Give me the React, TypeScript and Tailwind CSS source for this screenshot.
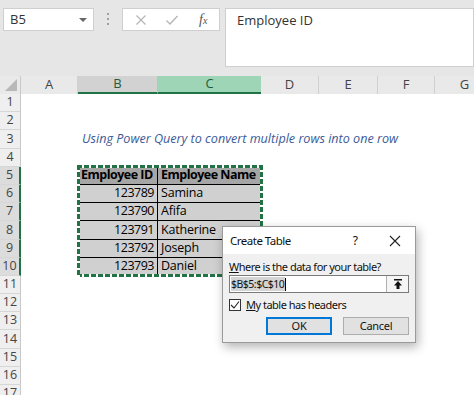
import React from "react";

const cols = [
  { k: "A", w: "w-[57px]" },
  { k: "B", w: "w-[80px]" },
  { k: "C", w: "w-[103px]" },
  { k: "D", w: "w-[58px]" },
  { k: "E", w: "w-[59px]" },
  { k: "F", w: "w-[57px]" },
  { k: "G", w: "w-[60px]" },
];

const data: [string, string][] = [
  ["123789", "Samina"],
  ["123790", "Afifa"],
  ["123791", "Katherine"],
  ["123792", "Joseph"],
  ["123793", "Daniel"],
];

function ColHeader() {
  return (
    <div className="flex h-[18px] bg-[#e9e9e9] text-[13px] text-[#444]">
      <div className="relative w-[21px] shrink-0 border-r border-[#c8c8c8]">
        <div className="absolute right-[3px] bottom-[3px] w-0 h-0 border-l-[12px] border-l-transparent border-b-[12px] border-b-[#b8b8b8]" />
      </div>
      {cols.map((c) => {
        let cls = "border-r border-[#d0d0d0]";
        if (c.k === "B") cls = "bg-[#d2d2d2] border-b-2 border-b-[#217346] border-r border-r-[#c0c0c0] text-[#1e5c3a]";
        if (c.k === "C") cls = "bg-[#9fd5b7] border-b-2 border-b-[#217346] text-[#1e5c3a]";
        return (
          <div key={c.k} className={`${c.w} shrink-0 flex items-center justify-center ${cls}`}>
            {c.k}
          </div>
        );
      })}
    </div>
  );
}

function Row({ n }: { n: number }) {
  const sel = n >= 5 && n <= 10;
  let b: React.ReactNode = null;
  let c: React.ReactNode = null;
  let bCls = "";
  let cCls = "";
  if (n === 3) {
    b = (
      <span className="absolute left-[4px] top-0 whitespace-nowrap italic text-[#3b5a97] text-[12.6px] leading-[18px]">
        Using Power Query to convert multiple rows into one row
      </span>
    );
  }
  if (n === 5) {
    bCls = "bg-[#a6a6a6] border-t border-b border-r border-black";
    cCls = "bg-[#a6a6a6] border-t border-b border-r border-black";
    b = <span className="pl-[3px] font-bold text-[12.5px] tracking-[-0.5px] text-black whitespace-nowrap">Employee ID</span>;
    c = <span className="pl-[3px] font-bold text-[12.5px] tracking-[-0.5px] text-black whitespace-nowrap">Employee Name</span>;
  }
  if (n >= 6 && n <= 10) {
    const d = data[n - 6];
    bCls = "bg-[#d0d0d0] border-b border-r border-black justify-end";
    cCls = "bg-[#d0d0d0] border-b border-r border-black";
    b = <span className="pr-[3px] text-[12.5px] tracking-[-0.5px] text-black">{d[0]}</span>;
    c = <span className="pl-[3px] text-[12.5px] tracking-[-0.2px] text-black">{d[1]}</span>;
  }
  return (
    <div className="flex h-[18.2px]">
      <div
        className={`w-[21px] shrink-0 flex items-center justify-center text-[12.5px] text-[#444] border-b border-[#d6d6d6] ${
          sel ? "bg-[#dcdcdc] border-r-2 border-r-[#217346]" : "bg-[#efefef] border-r border-r-[#c8c8c8]"
        }`}
      >
        {n}
      </div>
      <div className="w-[57px] shrink-0" />
      <div className={`relative w-[80px] shrink-0 flex items-center overflow-visible ${bCls}`}>{b}</div>
      <div className={`w-[103px] shrink-0 flex items-center overflow-hidden ${cCls}`}>{c}</div>
      <div className="flex-1" />
    </div>
  );
}

export default function App() {
  const rows = Array.from({ length: 17 }, (_, i) => i + 1);
  return (
    <div
      className="relative w-[474px] h-[395px] overflow-hidden bg-white"
      style={{ fontFamily: '"Open Sans", "Noto Sans", sans-serif' }}
    >
      {/* top formula bar area */}
      <div className="h-[76px] bg-[#e6e6e6] flex items-start pt-[8px] pl-[3px]">
        <div className="w-[91px] h-[23px] bg-white border border-[#cfcfcf] flex items-center justify-between pl-[6px] pr-[6px] text-[13px] text-[#333]">
          <span>B5</span>
          <span className="w-0 h-0 border-l-[4px] border-r-[4px] border-t-[4px] border-l-transparent border-r-transparent border-t-[#666]" />
        </div>
        <div className="ml-[13px] mt-[5px] flex flex-col gap-[3px]">
          <span className="w-[2px] h-[2px] bg-[#a0a0a0]" />
          <span className="w-[2px] h-[2px] bg-[#a0a0a0]" />
          <span className="w-[2px] h-[2px] bg-[#a0a0a0]" />
        </div>
        <div className="ml-[13px] w-[98px] h-[23px] bg-white border border-[#cfcfcf] flex items-center pl-[12px]">
          <svg width="12" height="12" viewBox="0 0 12 12">
            <path d="M1.5 1.5 L10.5 10.5 M10.5 1.5 L1.5 10.5" stroke="#b5b5b5" strokeWidth="1.2" fill="none" />
          </svg>
          <svg className="ml-[18px]" width="14" height="12" viewBox="0 0 14 12">
            <path d="M1.5 6.5 L5 10 L12.5 2" stroke="#b5b5b5" strokeWidth="1.3" fill="none" />
          </svg>
          <span
            className="ml-[20px] italic text-[14px] text-[#555]"
            style={{ fontFamily: '"Liberation Serif", serif' }}
          >
            f<span className="text-[10px]">x</span>
          </span>
        </div>
        <div className="ml-[5px] flex-1 h-[59px] bg-white border border-[#cfcfcf] pl-[11px] pt-[2px] text-[13px] text-[#333]">
          Employee ID
        </div>
      </div>

      <ColHeader />
      <div>
        {rows.map((n) => (
          <Row key={n} n={n} />
        ))}
      </div>

      {/* marching ants (selection copy border) */}
      <div className="pointer-events-none absolute left-[77px] top-[165px] w-[186px] h-[3px] bg-[repeating-linear-gradient(90deg,#217346_0_5px,#ffffff_5px_7px)]" />
      <div className="pointer-events-none absolute left-[77px] top-[274px] w-[186px] h-[3px] bg-[repeating-linear-gradient(90deg,#217346_0_5px,#ffffff_5px_7px)]" />
      <div className="pointer-events-none absolute left-[77px] top-[165px] w-[3px] h-[112px] bg-[repeating-linear-gradient(180deg,#217346_0_5px,#ffffff_5px_7px)]" />
      <div className="pointer-events-none absolute left-[260px] top-[165px] w-[3px] h-[112px] bg-[repeating-linear-gradient(180deg,#217346_0_5px,#ffffff_5px_7px)]" />

      {/* dialog */}
      <div
        className="absolute left-[222px] top-[226px] w-[194px] h-[117px] border border-[#9a9a9a] bg-[#f0f0f0] shadow-[2px_4px_10px_rgba(0,0,0,0.3)] flex flex-col"
        style={{ fontFamily: '"Noto Sans", "Open Sans", sans-serif' }}
      >
        <div className="h-[27px] shrink-0 bg-white flex items-center pl-[7px] text-[11.5px] tracking-[-0.5px] text-[#111]">
          <span className="flex-1">Create Table</span>
          <span className="w-[68px] text-center text-[12px]">?</span>
          <svg className="mr-[14px]" width="12" height="12" viewBox="0 0 12 12">
            <path d="M1 1 L11 11 M11 1 L1 11" stroke="#222" strokeWidth="1.1" fill="none" />
          </svg>
        </div>
        <div className="flex flex-col px-[6px] pt-[5px]">
          <div className="text-[11px] tracking-[-0.5px] leading-[15px] text-[#111]">
            <span className="underline">W</span>here is the data for your table?
          </div>
          <div className="mt-[1px] flex h-[18px] border border-[#7a7a7a] bg-white">
            <div className="flex-1 flex items-center pl-[1px]">
              <span className="bg-[#d4d4d4] text-[10.5px] leading-[14px] tracking-[-0.5px] text-[#111] pr-[1px]">$B$5:$C$10</span>
              <span className="w-[1px] h-[13px] bg-black" />
            </div>
            <div className="w-[22px] border-l border-[#b0b0b0] bg-[#f5f5f5] flex items-center justify-center">
              <svg width="10" height="12" viewBox="0 0 10 12">
                <rect x="1" y="1" width="8" height="1.5" fill="#111" />
                <path d="M5 3 L1 7.5 H3.5 V11 H6.5 V7.5 H9 Z" fill="#111" />
              </svg>
            </div>
          </div>
          <div className="mt-[5px] flex items-center gap-[5px]">
            <div className="w-[12px] h-[12px] border border-[#333] bg-white flex items-center justify-center">
              <svg width="10" height="10" viewBox="0 0 10 10">
                <path d="M1 5 L4 8 L9 1.5" stroke="#222" strokeWidth="1.1" fill="none" />
              </svg>
            </div>
            <span className="text-[11px] tracking-[-0.5px] text-[#111] leading-[14px]">
              <span className="underline">M</span>y table has headers
            </span>
          </div>
          <div className="mt-[5px] flex justify-end gap-[11px]">
            <div className="w-[66px] h-[18px] bg-[#e1e1e1] border-2 border-[#0078d7] flex items-center justify-center text-[11px] tracking-[-0.3px] text-[#111]">
              OK
            </div>
            <div className="w-[66px] h-[18px] bg-[#e1e1e1] border border-[#adadad] flex items-center justify-center text-[11px] tracking-[-0.3px] text-[#111]">
              Cancel
            </div>
          </div>
        </div>
      </div>
    </div>
  );
}
